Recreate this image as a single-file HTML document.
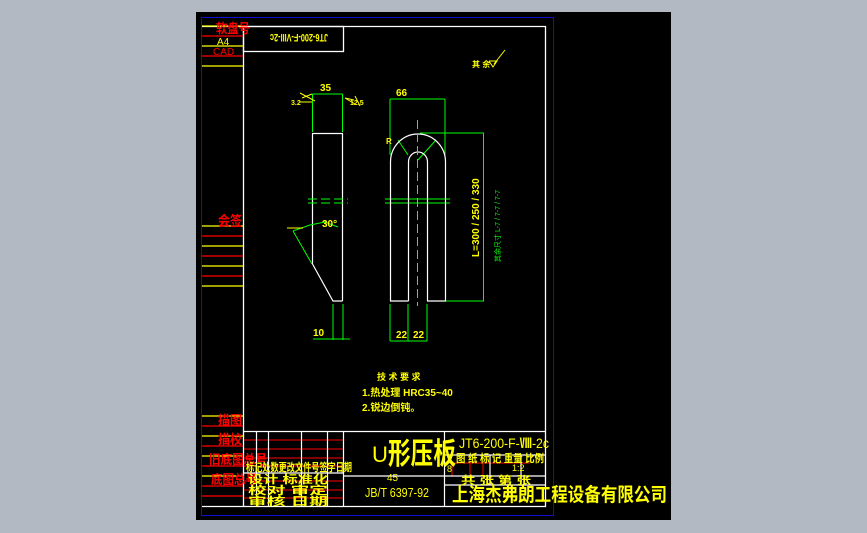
<!DOCTYPE html>
<html><head><meta charset="utf-8"><style>
html,body{margin:0;padding:0;background:#b3b9c3;}
svg{display:block}
text{font-family:"Liberation Sans","Noto Sans CJK SC",sans-serif;}
</style></head><body>
<svg width="867" height="533" viewBox="0 0 867 533" xmlns="http://www.w3.org/2000/svg">
<rect x="0" y="0" width="867" height="533" fill="#b3b9c3"/>
<rect x="196" y="12" width="475" height="508" fill="#000"/>
<rect x="201.5" y="17.5" width="352" height="498" fill="none" stroke="#1010d0" stroke-width="1"/>
<g stroke="#fff" stroke-width="1.3" fill="none">
<path d="M202 26.5H545.5V506.5H202"/>
<path d="M243.5 26V506"/>
<rect x="243.5" y="26.5" width="100" height="25"/>
</g>
<g stroke-width="1.2">
<path d="M202 26H243M202 46H243M202 66H243M202 226H243M202 246H243M202 266H243M202 286H243M202 416H243M202 436H243M202 456H243M202 476H243" stroke="#ff0"/>
<path d="M202 36H243M202 56H243M202 236H243M202 256H243M202 276H243M202 426H243M202 446H243M202 466H243M202 486H243M202 496H243" stroke="#f00"/>
</g>
<g fill="#f00" font-weight="bold">
<text x="216" y="33" font-size="13" textLength="34" lengthAdjust="spacingAndGlyphs">软盘号</text>
<text x="218" y="226" font-size="14" textLength="24" lengthAdjust="spacingAndGlyphs">会签</text>
<text x="218" y="425" font-size="13" textLength="24" lengthAdjust="spacingAndGlyphs">描图</text>
<text x="218" y="444" font-size="13" textLength="24" lengthAdjust="spacingAndGlyphs">描校</text>
<text x="209" y="464" font-size="13" textLength="58" lengthAdjust="spacingAndGlyphs">旧底图总号</text>
<text x="211" y="484" font-size="13" textLength="46" lengthAdjust="spacingAndGlyphs">底图总号</text>
</g>
<text x="217" y="45" font-size="10" fill="#ff0">A4</text>
<text x="213" y="55" font-size="10" fill="#f00">CAD</text>
<text x="0" y="0" font-size="11" fill="#ff0" font-weight="bold" textLength="58" lengthAdjust="spacingAndGlyphs" transform="translate(328,34) rotate(180)">JT6-200-F-VIII-2c</text>
<g stroke="#f00" stroke-width="1">
<path d="M244 440H343M244 449H343M244 458H343M244 466H343M244 481H343M244 490H343M244 498H343M444 463H530M452 463V476M470 463V476M483 463V476"/>
</g>
<g stroke="#fff" stroke-width="1.2" fill="none">
<path d="M243 431.5H545M243 473H343M343 476H545M444 455H545M444 485H545"/>
<path d="M256.5 431V506M268.5 431V506M301.5 431V506M327.5 431V506M343.5 431V506M444.5 431V506M490 455V485M521 455V485"/>
</g>
<g fill="#ff0" font-weight="bold" font-size="11">
<text x="246" y="471" textLength="106" lengthAdjust="spacingAndGlyphs">标记处数更改文件号签字日期</text>
<text x="248" y="483" textLength="80" lengthAdjust="spacingAndGlyphs">设计  标准化</text>
<text x="248" y="494" textLength="80" lengthAdjust="spacingAndGlyphs">校对  审定</text>
<text x="248" y="505" textLength="80" lengthAdjust="spacingAndGlyphs">审核  日期</text>
</g>
<text x="372" y="462" font-size="22" fill="#ff0">U</text>
<text x="388" y="464" font-size="30" fill="#ff0" font-weight="bold" textLength="68" lengthAdjust="spacingAndGlyphs">形压板</text>
<text x="459" y="448" font-size="14" fill="#ff0" textLength="90" lengthAdjust="spacingAndGlyphs">JT6-200-F-<tspan font-weight="bold">Ⅷ</tspan>-2c</text>
<text x="456" y="462" font-size="11" fill="#ff0" font-weight="bold" textLength="88" lengthAdjust="spacingAndGlyphs">图 纸 标 记  重量 比例</text>
<text x="447" y="472" font-size="9" fill="#ff0">8</text>
<text x="512" y="471" font-size="9" fill="#ff0">1:2</text>
<text x="461" y="484" font-size="11" fill="#ff0" font-weight="bold" textLength="70" lengthAdjust="spacingAndGlyphs">共  张   第  张</text>
<text x="387" y="481" font-size="10" fill="#ff0">45</text>
<text x="365" y="497" font-size="13" fill="#ff0" textLength="64" lengthAdjust="spacingAndGlyphs">JB/T 6397-92</text>
<text x="452" y="501" font-size="19" fill="#ff0" font-weight="bold" textLength="215" lengthAdjust="spacingAndGlyphs">上海杰弗朗工程设备有限公司</text>
<text x="472" y="67" font-size="8" fill="#ff0" font-weight="bold">其 余</text>
<path d="M489 61L493 67L497 61H489M494 64L505 50" stroke="#ff0" fill="none" stroke-width="1"/>
<g stroke="#fff" stroke-width="1.2" fill="none">
<path d="M312.5 264V133.5H342.5V301M312.5 264L333 301H342.5"/>
</g>
<g stroke="#0f0" stroke-width="1" fill="none">
<path d="M312.5 94V132M342.5 94V132M312.5 94H342.5"/>
<path d="M308 199H348M308 203H348" stroke-dasharray="9 4"/>
<path d="M333 304V340M343 304V340M313 339H350"/>
<path d="M293 231L310 225L325 222L338 227M293 231L312 264"/>
<path d="M390 99V155M445 99V155M390 99H445"/>
<path d="M385 199H450M385 203H450"/>
<path d="M390 304V341M408 304V341M427 304V341M390 341H427"/>
<path d="M420 133H483.5V301H446"/>
<path d="M398 140L408 155M436 140L418 160"/>
</g>
<g fill="#ff0" font-weight="bold">
<text x="320" y="91" font-size="10">35</text>
<text x="396" y="96" font-size="10">66</text>
<text x="322" y="227" font-size="10">30°</text>
<text x="313" y="336" font-size="10">10</text>
<text x="396" y="338" font-size="10">22</text>
<text x="413" y="338" font-size="10">22</text>
<text x="386" y="144" font-size="8">R</text>
</g>
<path d="M287 228H303M300 93L315 101M355 96L360 106M300 102H312" stroke="#ff0" fill="none" stroke-width="1"/>
<path d="M302 98L312 94M354 100L345 98L355 104" stroke="#ff0" fill="none"/>
<text x="291" y="105" font-size="7" fill="#ff0" font-weight="bold">3.2</text>
<text x="350" y="105" font-size="7" fill="#ff0" font-weight="bold">12.5</text>
<g stroke="#fff" stroke-width="1.2" fill="none">
<path d="M390.5 301V162A27.5 28 0 0 1 445.5 162V301M408.5 301V162A9.5 10 0 0 1 427.5 162V301M390 301H408.5M427 301H446"/>
</g>
<path d="M417.5 120V306" stroke="#1ad7e6" stroke-width="1" stroke-dasharray="9 4"/>
<text transform="translate(479,257) rotate(-90)" font-size="10" fill="#ff0" font-weight="bold">L=300 / 250 / 330</text>
<text transform="translate(500,262) rotate(-90)" font-size="7" fill="#0f0">其余尺寸 L-7 / 7-7 / 7-7</text>
<g fill="#ff0" font-weight="bold">
<text x="377" y="380" font-size="9">技 术 要 求</text>
<text x="362" y="396" font-size="10">1.热处理 HRC35~40</text>
<text x="362" y="411" font-size="10">2.锐边倒钝。</text>
</g>
</svg>
</body></html>
